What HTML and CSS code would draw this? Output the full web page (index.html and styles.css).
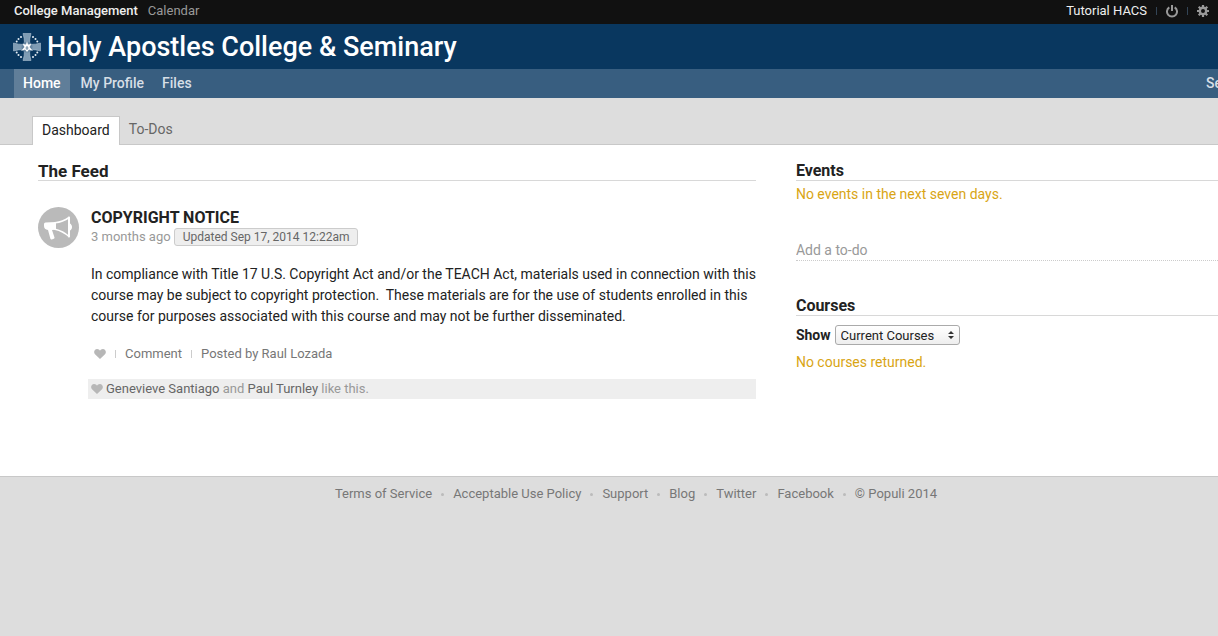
FILE: index.html
```html
<!DOCTYPE html>
<html lang="en">
<head>
<meta charset="utf-8">
<title>Holy Apostles College &amp; Seminary</title>
<link rel="stylesheet" href="styles.css">
</head>
<body>
<header>
  <div class="topbar">
    <nav class="apps">
      <a class="current" href="#">College Management</a>
      <a href="#">Calendar</a>
    </nav>
    <div class="account">
      <a class="user" href="#">Tutorial HACS</a>
      <span class="divider"></span>
      <button type="button" class="icon-button" aria-label="Log out">
        <svg width="12" height="13" viewBox="0 0 12 13" fill="none" stroke="currentColor" stroke-width="2"><path d="M3.3 2.4a5 5 0 1 0 5.4 0M6 0v6"/></svg>
      </button>
      <span class="divider"></span>
      <button type="button" class="icon-button" aria-label="Settings">
        <svg width="12" height="12" viewBox="-6 -6 12 12" fill="none" stroke="currentColor"><circle r="3.2" stroke-width="2.4"/><path stroke-width="2.2" d="M0-6v2.4M0 6V3.6M-6 0h2.4M6 0H3.6M-4.3-4.3l1.8 1.8M4.3 4.3L2.5 2.5M-4.3 4.3l1.8-1.8M4.3-4.3L2.5-2.5"/></svg>
      </button>
    </div>
  </div>
  <div class="brand">
    <svg class="crest" width="28" height="28" viewBox="-14 -14 28 28" aria-hidden="true">
      <g fill="#e4edf4">
        <circle cx="6" cy="-10" r="1"/><circle cx="8.500" cy="-8" r="1"/><circle cx="10.300" cy="-5.500" r="1"/>
        <circle cx="-6" cy="-10" r="1"/><circle cx="-8.500" cy="-8" r="1"/><circle cx="-10.300" cy="-5.500" r="1"/>
        <circle cx="6" cy="10" r="1"/><circle cx="8.500" cy="8" r="1"/><circle cx="10.300" cy="5.500" r="1"/>
        <circle cx="-6" cy="10" r="1"/><circle cx="-8.500" cy="8" r="1"/><circle cx="-10.300" cy="5.500" r="1"/>
      </g>
      <g fill="#7f9cb4" stroke="#a9bfd0" stroke-width=".6">
        <path d="M-4-13.500h8Q2.500-9 2.500-3h-5Q-2.500-9-4-13.500z"/><path d="M-4 13.500h8Q2.500 9 2.500 3h-5Q-2.500 9-4 13.500z"/>
        <path d="M-13.500-4v8Q-9 2.500-3 2.500v-5Q-9-2.500-13.500-4z"/><path d="M13.500-4v8Q9 2.500 3 2.500v-5Q9-2.500 13.500-4z"/>
      </g>
      <circle r="5.500" fill="#6585a0"/>
      <path fill="#fff" d="M0-6l1 3.500L4.500-3 2.500 0 6 4 2 2.500 0 5-2 2.500-6 4l3.500-4-2-3 3.500.5z"/>
      <path d="M-1.500 1h3M0-1v4" stroke="#52748f" stroke-width=".8"/>
    </svg>
    <h1>Holy Apostles College &amp; Seminary</h1>
  </div>
  <nav class="mainnav">
    <a class="current" href="#">Home</a>
    <a href="#">My Profile</a>
    <a href="#">Files</a>
    <a class="search" href="#">Search</a>
  </nav>
</header>
<nav class="tabs">
  <a class="current" href="#">Dashboard</a>
  <a href="#">To-Dos</a>
</nav>
<main>
  <section class="feed">
    <h2>The Feed</h2>
    <article>
      <svg class="avatar" width="41" height="41" viewBox="0 0 41 41" aria-hidden="true">
        <circle cx="20.500" cy="20.500" r="20.500" fill="#bababa"/>
        <path fill="#fff" d="M6 17q0-1.500 1.500-1.500L18 15v7.700l-4 .3 2.500 7.500q.3 1-.7 1.300l-2 .6q-1 .3-1.400-.7L10 23q-4-.5-4-4z"/>
        <path fill="none" stroke="#fff" stroke-width="1.600" stroke-linejoin="round" d="M17 15.700q8-.8 14-5.200v19q-6-5.500-14-7.300z"/>
        <path fill="none" stroke="#fff" stroke-width="2" stroke-linecap="round" d="M31 10.500v19M32 17.500q2 2.500 0 5"/>
      </svg>
      <div class="post">
        <h3>COPYRIGHT NOTICE</h3>
        <p class="meta"><span>3 months ago</span><span class="updated">Updated Sep 17, 2014 12:22am</span></p>
        <p class="body">In compliance with Title 17 U.S. Copyright Act and/or the TEACH Act, materials used in connection with this<br>course may be subject to copyright protection.&nbsp; These materials are for the use of students enrolled in this<br>course for purposes associated with this course and may not be further disseminated.</p>
        <div class="actions">
          <button type="button" class="like" aria-label="Like"><svg width="12" height="10" viewBox="0 0 12 10" fill="#b7b7b7"><path d="M6 10L1 5.300C-.8 3.300.4 0 3.100 0 4.500 0 5.500.8 6 1.800 6.500.8 7.500 0 8.900 0c2.700 0 3.900 3.300 2.100 5.300z"/></svg></button>
          <span class="divider"></span>
          <button type="button">Comment</button>
          <span class="divider"></span>
          <a href="#">Posted by Raul Lozada</a>
        </div>
        <p class="likes"><svg width="12" height="10" viewBox="0 0 12 10" fill="#b7b7b7" aria-hidden="true"><path d="M6 10L1 5.300C-.8 3.300.4 0 3.100 0 4.500 0 5.500.8 6 1.800 6.500.8 7.500 0 8.900 0c2.700 0 3.900 3.300 2.100 5.300z"/></svg><span><a href="#">Genevieve Santiago</a> and <a href="#">Paul Turnley</a> like this.</span></p>
      </div>
    </article>
  </section>
  <aside>
    <h2>Events</h2>
    <p class="notice">No events in the next seven days.</p>
    <input class="todo" type="text" placeholder="Add a to-do" aria-label="Add a to-do">
    <h2>Courses</h2>
    <div class="filter">
      <label for="show">Show</label>
      <span class="select">
        <select id="show"><option>Current Courses</option></select>
        <svg width="6" height="8" viewBox="0 0 6 8" fill="#333" aria-hidden="true"><path d="M3 0l3 3H0zM3 8L0 5h6z"/></svg>
      </span>
    </div>
    <p class="notice">No courses returned.</p>
  </aside>
</main>
<footer>
  <a href="#">Terms of Service</a><i></i>
  <a href="#">Acceptable Use Policy</a><i></i>
  <a href="#">Support</a><i></i>
  <a href="#">Blog</a><i></i>
  <a href="#">Twitter</a><i></i>
  <a href="#">Facebook</a><i></i>
  <span>© Populi 2014</span>
</footer>
</body>
</html>
```
FILE: styles.css
```css
* { box-sizing: border-box; }
body {
  margin: 0;
  background: #ddd;
  color: #222;
  font: 14px/20px Roboto, "Liberation Sans", sans-serif;
  overflow-x: hidden;
}
h1, h2, h3, p { margin: 0; }
a { color: inherit; text-decoration: none; white-space: nowrap; }
button { padding: 0; border: 0; background: none; color: inherit; font: inherit; }
svg { display: block; flex: none; }

.topbar {
  display: flex;
  justify-content: space-between;
  height: 24px;
  padding: 0 9px 2px 14px;
  background: #111;
  color: #999;
  font-size: 13px;
}
.apps { display: flex; gap: 10px; align-items: center; }
.apps .current { color: #eee; font-weight: 500; }
.account { display: flex; gap: 9px; align-items: center; }
.user { color: #eee; }
.divider { width: 1px; height: 8px; background: #345; }

.brand {
  display: flex;
  align-items: center;
  gap: 6px;
  height: 45px;
  padding-left: 13px;
  background: #09375f;
  color: #fff;
}
h1 { font-size: 27px; line-height: 32px; font-weight: 500; white-space: nowrap; }

.mainnav {
  display: flex;
  padding-left: 14px;
  overflow: hidden;
  background: #385e80;
  color: #d7dfe6;
  font-size: 14px;
  font-weight: 500;
  line-height: 29px;
}
.mainnav a { padding: 0 9px; }
.mainnav .current { margin-right: 2px; background: #607e99; color: #fff; }
.mainnav .search { width: 12px; margin-left: auto; padding: 0; }

.tabs {
  display: flex;
  align-items: flex-end;
  height: 47px;
  padding-left: 32px;
  border-bottom: 1px solid #c8c8c8;
  color: #666;
}
.tabs a { padding: 3px 9px 5px; }
.tabs .current {
  margin-bottom: -1px;
  border: 1px solid #c8c8c8;
  border-bottom: 0;
  background: #fff;
  color: #222;
}

main {
  display: grid;
  grid-template-columns: 17fr 10fr;
  gap: 40px;
  padding: 14px 0 77px 38px;
  background: #fff;
  border-bottom: 1px solid #c8c8c8;
}
h2 {
  padding-top: 3px;
  border-bottom: 1px solid #d8d8d8;
  font-size: 17px;
  line-height: 18px;
  font-weight: 700;
}
article { display: flex; gap: 12px; margin-top: 26px; }
.post { flex: 1; }
h3 { padding-top: 1px; font-size: 16px; font-weight: 700; }
.meta { display: flex; align-items: center; gap: 3px; color: #999; font-size: 13px; line-height: 16px; }
.updated {
  padding: 0 8px;
  border: 1px solid #ccc;
  border-radius: 3px;
  background: #eee;
  color: #666;
  font-size: 12px;
}
.body { margin-top: 18px; line-height: 21px; white-space: nowrap; }
.actions {
  display: flex;
  align-items: center;
  gap: 9px;
  margin: 17px 0 15px 3px;
  color: #777;
  font-size: 13px;
}
.actions .divider { background: #ccc; }
.likes {
  display: flex;
  align-items: center;
  gap: 3px;
  margin-left: -3px;
  padding-left: 3px;
  background: #eee;
  color: #999;
  font-size: 13px;
}
.likes a { color: #666; }

aside h2 { font-size: 16px; }
.notice { margin-top: 3px; color: #d9a514; }
.todo {
  display: block;
  width: 100%;
  margin: 36px 0 33px;
  padding: 0;
  border: 0;
  border-bottom: 1px dotted #ccc;
  outline: 0;
  font: inherit;
}
.todo::placeholder { color: #999; opacity: 1; }
.filter { display: flex; align-items: center; gap: 4px; margin: 9px 0 7px; }
.filter label { font-weight: 700; }
.select { display: grid; align-items: center; }
.select > * { grid-area: 1 / 1; }
.select svg { justify-self: end; margin-right: 6px; pointer-events: none; }
select {
  appearance: none;
  width: 125px;
  height: 20px;
  padding: 0 5px;
  border: 1px solid #aaa;
  border-radius: 3px;
  background: linear-gradient(#fff, #eee);
  color: #222;
  font: inherit;
  font-size: 13px;
}

footer {
  display: flex;
  flex-wrap: wrap;
  justify-content: center;
  align-items: center;
  gap: 9px;
  padding: 7px 0 7px 54px;
  color: #777;
  font-size: 13px;
}
footer i { width: 3px; height: 3px; border-radius: 50%; background: #bbb; }
```
